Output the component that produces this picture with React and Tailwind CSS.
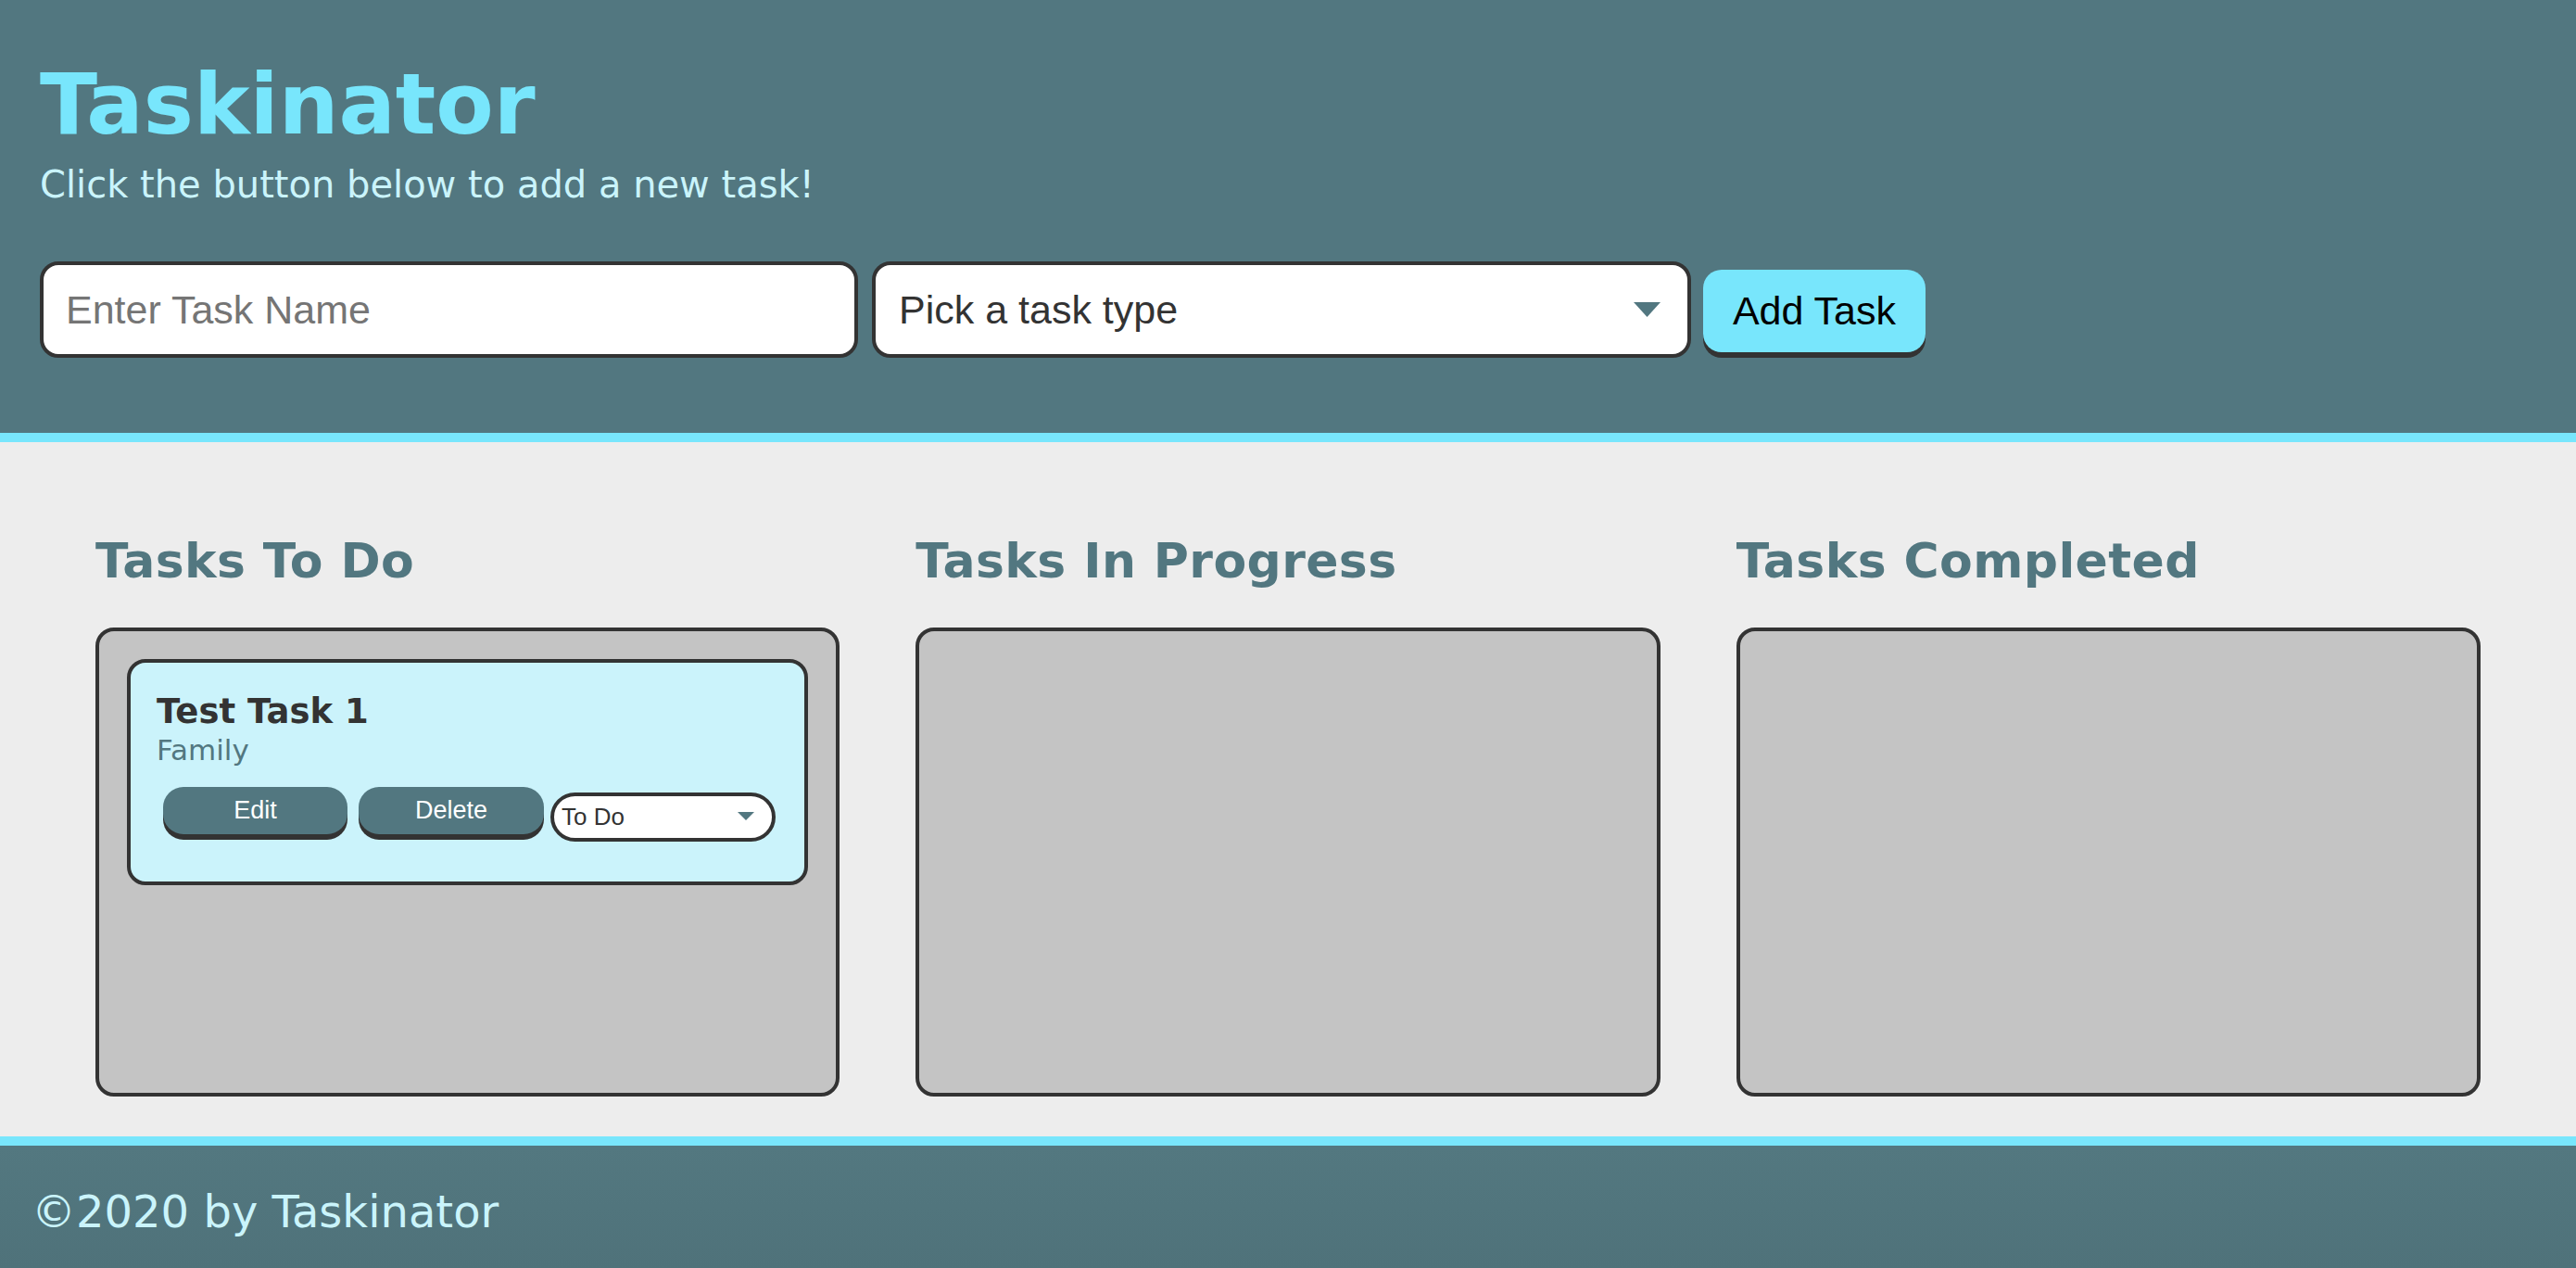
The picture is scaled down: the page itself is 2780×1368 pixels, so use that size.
import { useState } from "react";

const columns = [
  { id: "to-do", title: "Tasks To Do" },
  { id: "in-progress", title: "Tasks In Progress" },
  { id: "completed", title: "Tasks Completed" },
];

const Arrow = ({ className }) => (
  <svg className={className} viewBox="0 0 10 5" preserveAspectRatio="none">
    <path d="M0 0 L10 0 L5 5 Z" fill="#527780" />
  </svg>
);

const TaskCard = ({ task }) => (
  <li className="flex flex-col pt-[34px] pb-[43px] px-[28px] rounded-[20px] border-4 border-[#333] bg-[#cbf3fb]">
    <h3 className="text-[37px] leading-none font-bold text-[#333]">{task.name}</h3>
    <span className="mt-[8px] text-[31px] leading-none text-[#527780]">{task.type}</span>
    <div className="mt-[24px] ml-[7px] flex items-start font-['Liberation_Sans',Arial,sans-serif]">
      <button className="w-[199px] h-[51px] rounded-[22px] bg-[#527780] text-white text-[27px] shadow-[0_6px_0_#333]">
        Edit
      </button>
      <button className="ml-[12px] w-[200px] h-[51px] rounded-[22px] bg-[#527780] text-white text-[27px] shadow-[0_6px_0_#333]">
        Delete
      </button>
      <div className="relative ml-[7px] mt-[6px]">
        <select
          defaultValue="to do"
          className="appearance-none w-[243px] h-[53px] pl-[8px] rounded-full border-4 border-[#333] bg-white text-[26px] text-[#333] outline-none"
        >
          <option value="to do">To Do</option>
          <option value="in progress">In Progress</option>
          <option value="completed">Completed</option>
        </select>
        <Arrow className="absolute right-[23px] top-[21px] w-[18px] h-[9px] pointer-events-none" />
      </div>
    </div>
  </li>
);

const App = () => {
  const [tasks] = useState([
    { id: 1, name: "Test Task 1", type: "Family", status: "to-do" },
  ]);

  return (
    <div className="min-h-screen flex flex-col font-['DejaVu_Sans',Verdana,sans-serif]">
      <header className="pt-[67px] pb-[81px] pl-[43px] bg-[#527780] border-b-[10px] border-[#78e6fc]">
        <h1 className="text-[91px] leading-none font-bold text-[#78e6fc]">Taskinator</h1>
        <p className="mt-[21px] text-[40px] leading-none text-[#caf4fb]">
          Click the button below to add a new task!
        </p>
        <form className="mt-[63px] flex items-start font-['Liberation_Sans',Arial,sans-serif]">
          <input
            type="text"
            placeholder="Enter Task Name"
            className="w-[883px] h-[104px] pl-[24px] rounded-[20px] border-4 border-[#333] bg-white text-[43px] text-[#333] placeholder:text-[#757575] outline-none"
          />
          <div className="relative ml-[15px]">
            <select
              defaultValue=""
              className="appearance-none w-[884px] h-[104px] pl-[25px] rounded-[20px] border-4 border-[#333] bg-white text-[43px] text-[#333] outline-none"
            >
              <option value="" disabled>
                Pick a task type
              </option>
              <option value="Work">Work</option>
              <option value="Personal">Personal</option>
              <option value="Family">Family</option>
            </select>
            <Arrow className="absolute right-[33px] top-[44px] w-[29px] h-[16px] pointer-events-none" />
          </div>
          <button
            type="button"
            className="ml-[13px] mt-[9px] w-[240px] h-[89px] rounded-[20px] bg-[#78e6fc] text-black text-[43px] shadow-[0_6px_0_#333]"
          >
            Add Task
          </button>
        </form>
      </header>

      <main className="grid grid-cols-3 gap-[82px] px-[103px] pt-[102px] pb-[43px] bg-[#ededed]">
        {columns.map((col) => (
          <section key={col.id} className="flex flex-col">
            <h2 className="text-[52px] leading-none font-bold tracking-[0.4px] text-[#527780]">{col.title}</h2>
            <ul className="mt-[46px] h-[506px] p-[30px] rounded-[20px] border-4 border-[#333] bg-[#c4c4c4]">
              {tasks
                .filter((t) => t.status === col.id)
                .map((task) => (
                  <TaskCard key={task.id} task={task} />
                ))}
            </ul>
          </section>
        ))}
      </main>

      <footer className="flex-grow pt-[47px] pb-[37px] px-[34px] border-t-[10px] border-[#78e6fc] bg-linear-to-b from-[#537880] to-[#4f727a]">
        <h3 className="text-[48px] leading-none text-[#caf4fb]">©2020 by Taskinator</h3>
      </footer>
    </div>
  );
};

export default App;
